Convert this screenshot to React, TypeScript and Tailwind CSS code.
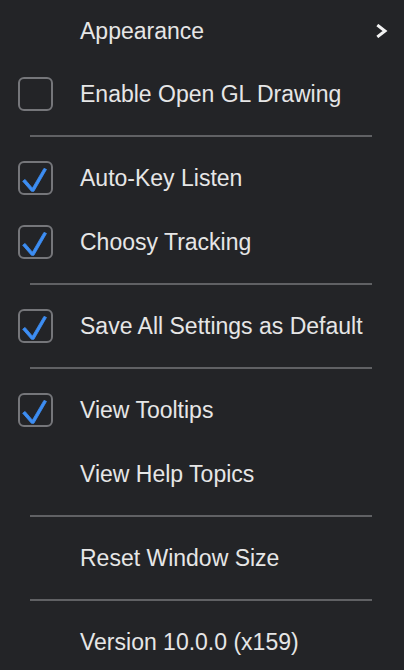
import React from "react";

type Item =
  | { kind: "row"; label: string; checked?: boolean; submenu?: boolean; first?: boolean }
  | { kind: "divider" };

const ITEMS: Item[] = [
  { kind: "row", label: "Appearance", submenu: true, first: true },
  { kind: "row", label: "Enable Open GL Drawing", checked: false },
  { kind: "divider" },
  { kind: "row", label: "Auto-Key Listen", checked: true },
  { kind: "row", label: "Choosy Tracking", checked: true },
  { kind: "divider" },
  { kind: "row", label: "Save All Settings as Default", checked: true },
  { kind: "divider" },
  { kind: "row", label: "View Tooltips", checked: true },
  { kind: "row", label: "View Help Topics" },
  { kind: "divider" },
  { kind: "row", label: "Reset Window Size" },
  { kind: "divider" },
  { kind: "row", label: "Version 10.0.0 (x159)" },
];

const CheckBox = ({ checked }: { checked: boolean }) => (
  <div className="w-[35px] h-[34px] rounded-[6px] border-[2.5px] border-[#75767a] flex">
    {checked && (
      <svg viewBox="0 0 30 29" className="w-full h-full">
        <path
          d="M2.6 17.6 L4.9 15.9 L12 24.3 L23.2 5.2 L25.6 6.2 L13.4 27.4 L11.1 27.4 Z"
          fill="#3d8ef4"
          stroke="#3d8ef4"
          strokeWidth="0.8"
          strokeLinejoin="round"
        />
      </svg>
    )}
  </div>
);

const Chevron = () => (
  <svg viewBox="0 0 12 14" className="w-[12px] h-[14px]">
    <path
      d="M2.5 2 L9 7 L2.5 12"
      fill="none"
      stroke="#f2f2f2"
      strokeWidth="3"
      strokeLinecap="square"
      strokeLinejoin="miter"
    />
  </svg>
);

export default function App() {
  return (
    <div
      className="w-[404px] h-[670px] overflow-hidden bg-[#232427] text-[#e6e6e6] text-[23px]"
      style={{ fontFamily: '"Liberation Sans", Arial, sans-serif' }}
    >
      {ITEMS.map((item, i) =>
        item.kind === "divider" ? (
          <div key={i} className="h-[20px] flex items-center pl-[30px] pr-[32px]">
            <div className="h-[2px] w-full bg-[#606164]" />
          </div>
        ) : (
          <div
            key={i}
            className={`flex items-center ${item.first ? "h-[62px]" : "h-[64px]"}`}
          >
            <div className="w-[80px] pl-[18px] flex items-center">
              {item.checked !== undefined && <CheckBox checked={item.checked} />}
            </div>
            <span className="flex-1 leading-none">{item.label}</span>
            {item.submenu && (
              <div className="pr-[16px] flex items-center">
                <Chevron />
              </div>
            )}
          </div>
        )
      )}
    </div>
  );
}
